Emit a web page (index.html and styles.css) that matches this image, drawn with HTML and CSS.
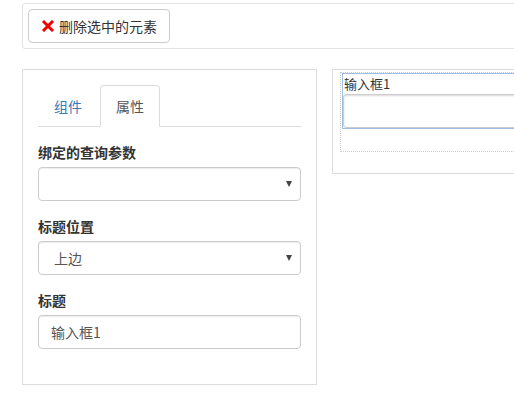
FILE: index.html
```html
<!DOCTYPE html>
<html lang="zh-CN">
<head>
<meta charset="UTF-8">
<title>表单设计</title>
<link rel="stylesheet" href="styles.css">
</head>
<body>
    <div class="page">
        <div class="toolbar">
            <button class="btn">
                <svg class="icon-remove" width="12" height="12" viewBox="0 0 12 12">
                    <path d="M2 2 L10 10 M10 2 L2 10" stroke="#e00" stroke-width="3" stroke-linecap="square"/>
                </svg>
                删除选中的元素
            </button>
        </div>

        <div class="main">
            <div class="panel side-panel">
                <ul class="tabs">
                    <li class="tab"><a>组件</a></li>
                    <li class="tab active"><a>属性</a></li>
                </ul>
                <div class="tab-content">
                    <div class="form-group">
                        <label>绑定的查询参数</label>
                        <div class="select-box">
                            <span class="select-value"></span>
                            <span class="caret"></span>
                        </div>
                    </div>
                    <div class="form-group">
                        <label>标题位置</label>
                        <div class="select-box">
                            <span class="select-value">上边</span>
                            <span class="caret"></span>
                        </div>
                    </div>
                    <div class="form-group">
                        <label>标题</label>
                        <div class="text-box">输入框1</div>
                    </div>
                </div>
            </div>

            <div class="panel canvas-panel">
                <div class="drop-zone">
                    <div class="field selected">
                        <div class="field-label">输入框1</div>
                        <div class="field-input"></div>
                    </div>
                </div>
            </div>
        </div>
    </div>
</body>
</html>
```

FILE: styles.css
```css
body {
    margin: 0;
    padding: 0;
    font-family: "Noto Sans CJK SC", "Liberation Sans", sans-serif;
    font-size: 14px;
    line-height: 20px;
    color: #333;
    background: #fff;
    overflow: hidden;
}

.page {
    width: 700px;
    padding: 3px 0 0 22px;
}

.toolbar {
    border: 1px solid #e3e3e3;
    border-radius: 3px;
    padding: 5px;
    height: 34px;
}

.btn {
    display: flex;
    align-items: center;
    height: 34px;
    padding: 0 12px 0 13px;
    border: 1px solid #ccc;
    border-radius: 4px;
    background: #fff;
    font-family: inherit;
    font-size: 14px;
    color: #333;
}

.icon-remove {
    margin-right: 5px;
}

.main {
    display: flex;
    align-items: flex-start;
    gap: 15px;
    margin-top: 20px;
}

.panel {
    border: 1px solid #ddd;
}

.side-panel {
    width: 263px;
    padding: 15px 15px 20px;
}

.tabs {
    list-style: none;
    margin: 0;
    padding: 0;
    display: flex;
    border-bottom: 1px solid #ddd;
}

.tab {
    margin-right: 2px;
    margin-bottom: -1px;
}

.tab a {
    display: block;
    padding: 10px 15px;
    border: 1px solid transparent;
    border-radius: 4px 4px 0 0;
    color: #337ab7;
}

.tab.active a {
    color: #555;
    background: #fff;
    border-color: #ddd #ddd transparent;
}

.tab-content {
    padding-top: 15px;
}

.form-group {
    margin-bottom: 15px;
}

.form-group label {
    display: block;
    font-weight: bold;
    margin-bottom: 5px;
}

.select-box,
.text-box {
    display: flex;
    align-items: center;
    height: 32px;
    border: 1px solid #ccc;
    border-radius: 4px;
    padding: 0 8px 0 12px;
    color: #555;
    box-shadow: inset 0 1px 1px rgba(0, 0, 0, 0.075);
}

.select-value {
    flex: 1;
    padding-left: 3px;
}

.caret {
    width: 0;
    height: 0;
    border-left: 3px solid transparent;
    border-right: 3px solid transparent;
    border-top: 6px solid #444;
}

.canvas-panel {
    width: 300px;
    padding: 2px 7px 21px;
}

.drop-zone {
    border: 1px dotted #ccc;
    min-height: 78px;
}

.field {
    margin: 0 0 0 1px;
}

.field.selected {
    border: 1px solid #9dc0e2;
}

.field-label {
    font-size: 13px;
    line-height: 20px;
    padding: 0 0 0 1px;
    color: #333;
}

.field-input {
    height: 32px;
    border: 1px solid #ccc;
    border-radius: 3px;
    box-shadow: inset 0 1px 2px rgba(0, 0, 0, 0.15);
}
```
